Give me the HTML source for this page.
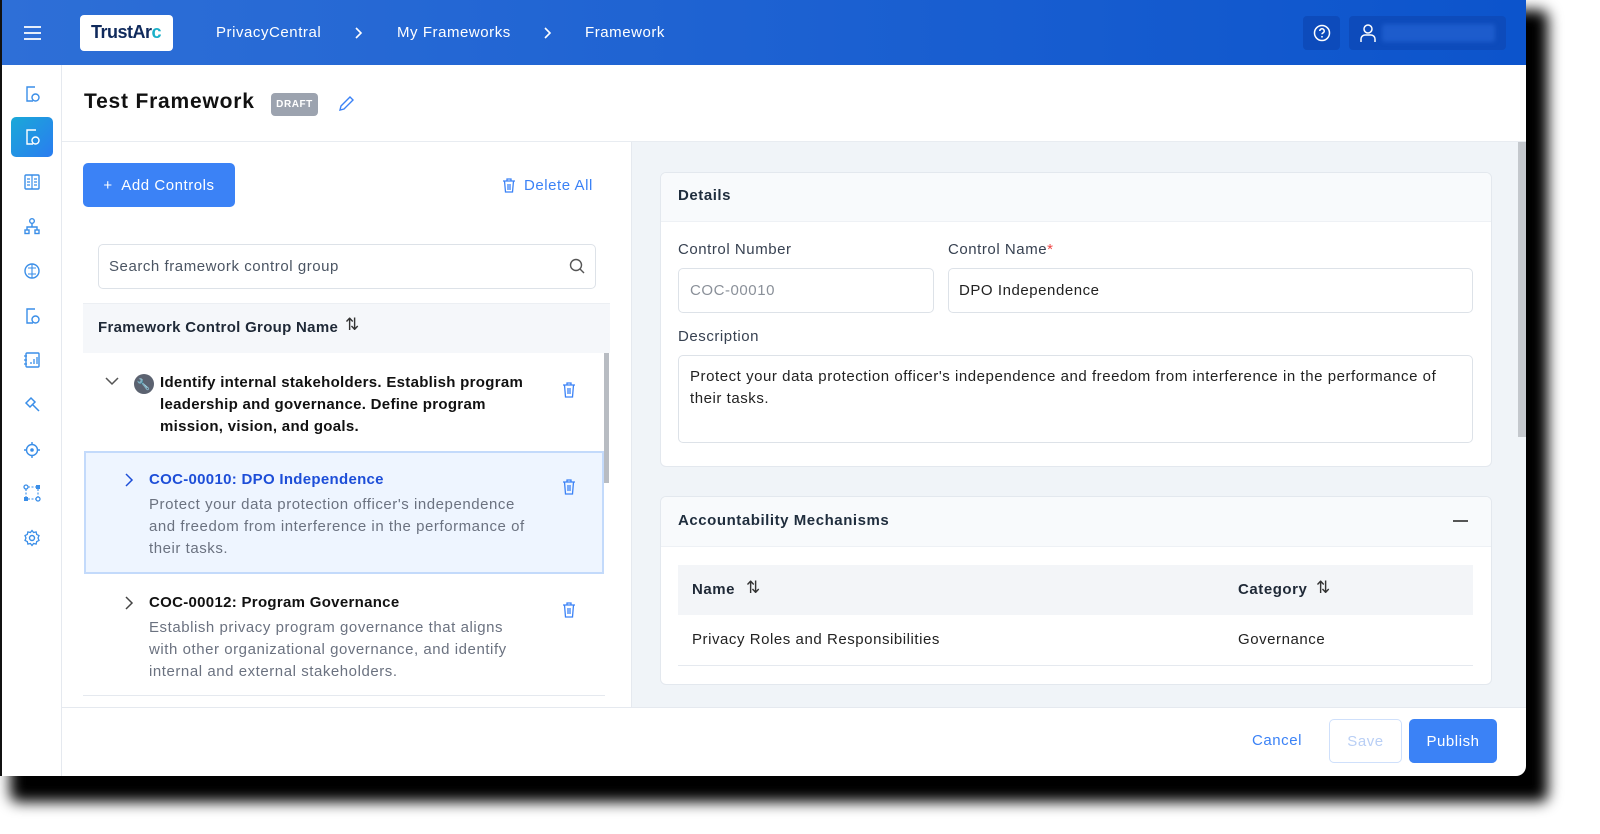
<!DOCTYPE html>
<html><head><meta charset="utf-8"><style>
*{box-sizing:border-box;margin:0;padding:0}
body{width:1600px;height:834px;background:#fff;position:relative;overflow:hidden;font-family:"Liberation Sans",sans-serif;color:#1f2937;letter-spacing:0.55px}
.shadow{position:absolute;left:10px;top:10px;width:1538px;height:792px;background:#000;border-radius:8px;filter:blur(7px)}
.win{position:absolute;left:0;top:0;width:1526px;height:776px;background:#fff;border-left:2px solid #111;border-bottom-right-radius:10px;overflow:hidden}
.hdr{position:absolute;left:0;top:0;width:1524px;height:65px;background:linear-gradient(90deg,#2e6fd7,#0c54cc);color:#fff}
.abs{position:absolute}
.t{position:absolute;white-space:nowrap}
.side{position:absolute;left:0;top:65px;width:60px;height:711px;background:#fff;border-right:1px solid #e5e9ef}
.ic{position:absolute;left:21px;width:18px;height:18px}
.btn{position:absolute;border-radius:5px;display:flex;align-items:center;justify-content:center;font-size:15px}
.in{position:absolute;background:#fff;border:1px solid #dde2e8;border-radius:5px;font-size:14.5px}
</style></head><body>
<div class="shadow"></div>
<div class="win">
 <div class="hdr">
  <svg class="abs" style="left:22px;top:26px" width="17" height="14"><path d="M0 1h17M0 7h17M0 13h17" stroke="#fff" stroke-width="1.8"/></svg>
  <div class="abs" style="left:78px;top:15px;width:93px;height:36px;background:#fff;border-radius:4px"></div>
  <div class="t" style="left:89px;top:22px;font-size:18px;font-weight:bold;color:#102a5c;letter-spacing:-0.5px">TrustAr<span style="color:#1ab0c8">c</span></div>
  <div class="t" style="left:214px;top:24px;font-size:15px">PrivacyCentral</div>
  <svg class="abs" style="left:353px;top:27px" width="8" height="12"><path d="M1 1l5 5-5 5" stroke="#fff" fill="none" stroke-width="1.6"/></svg>
  <div class="t" style="left:395px;top:24px;font-size:15px">My Frameworks</div>
  <svg class="abs" style="left:542px;top:27px" width="8" height="12"><path d="M1 1l5 5-5 5" stroke="#fff" fill="none" stroke-width="1.6"/></svg>
  <div class="t" style="left:583px;top:24px;font-size:15px">Framework</div>
  <div class="abs" style="left:1301px;top:16px;width:37px;height:34px;background:#0d4bbb;border-radius:4px"></div>
  <svg class="abs" style="left:1311px;top:24px" width="18" height="18"><circle cx="9" cy="9" r="7.5" stroke="#fff" fill="none" stroke-width="1.5"/><path d="M6.8 7a2.2 2.2 0 1 1 3 2c-.6.3-.8.7-.8 1.3" stroke="#fff" fill="none" stroke-width="1.5"/><circle cx="9" cy="12.8" r=".9" fill="#fff"/></svg>
  <div class="abs" style="left:1347px;top:16px;width:157px;height:34px;background:#0d4bbb;border-radius:4px"></div>
  <svg class="abs" style="left:1357px;top:23px" width="18" height="20"><circle cx="9" cy="6" r="4" stroke="#fff" fill="none" stroke-width="1.5"/><path d="M2 19v-3a4 4 0 0 1 4-4h6a4 4 0 0 1 4 4v3" stroke="#fff" fill="none" stroke-width="1.5"/></svg>
  <div class="abs" style="left:1380px;top:24px;width:113px;height:18px;background:#1d5ccc;border-radius:3px;filter:blur(2px)"></div>
 </div>
 <div class="side">
  <div class="abs" style="left:9px;top:52px;width:42px;height:40px;border-radius:5px;background:linear-gradient(135deg,#1aa9d8,#2a7cf0)"></div>
  <svg class="ic" style="top:20px" viewBox="0 0 18 18"><path d="M12 2H4v14h6" stroke="#3a8ee8" fill="none" stroke-width="1.4"/><circle cx="12.5" cy="12.5" r="3.5" stroke="#3a8ee8" fill="none" stroke-width="1.4"/></svg>
  <svg class="ic" style="top:63px" viewBox="0 0 18 18"><path d="M13 2H4v14h6" stroke="#fff" fill="none" stroke-width="1.4"/><circle cx="12.5" cy="12.5" r="3.5" stroke="#fff" fill="none" stroke-width="1.4"/></svg>
  <svg class="ic" style="top:108px" viewBox="0 0 18 18"><rect x="2" y="2" width="14" height="14" rx="1" stroke="#3a8ee8" fill="none" stroke-width="1.4"/><path d="M9 2v14M4 6h3M4 9h3M4 12h3M11 6h3M11 9h3M11 12h3" stroke="#3a8ee8" stroke-width="1.2"/></svg>
  <svg class="ic" style="top:152px" viewBox="0 0 18 18"><circle cx="9" cy="4" r="2.3" stroke="#3a8ee8" fill="none" stroke-width="1.4"/><path d="M9 6v4M4 13v-3h10v3" stroke="#3a8ee8" fill="none" stroke-width="1.4"/><rect x="2" y="13" width="4" height="3.5" stroke="#3a8ee8" fill="none" stroke-width="1.4"/><rect x="12" y="13" width="4" height="3.5" stroke="#3a8ee8" fill="none" stroke-width="1.4"/></svg>
  <svg class="ic" style="top:197px" viewBox="0 0 18 18"><circle cx="9" cy="9" r="7" stroke="#3a8ee8" fill="none" stroke-width="1.4"/><path d="M9 2v14M5 6h8M5 12h8" stroke="#3a8ee8" stroke-width="1.1"/></svg>
  <svg class="ic" style="top:242px" viewBox="0 0 18 18"><path d="M12 2H4v14h6" stroke="#3a8ee8" fill="none" stroke-width="1.4"/><circle cx="12.5" cy="12.5" r="3.5" stroke="#3a8ee8" fill="none" stroke-width="1.4"/></svg>
  <svg class="ic" style="top:286px" viewBox="0 0 18 18"><rect x="3" y="2" width="13" height="14" rx="1" stroke="#3a8ee8" fill="none" stroke-width="1.4"/><path d="M8 13v-2M11 13V8M14 13V6M1 5h3M1 9h3M1 13h3" stroke="#3a8ee8" stroke-width="1.3"/></svg>
  <svg class="ic" style="top:331px" viewBox="0 0 18 18"><path d="M3 7l5-5 4 4-5 5zM10 9l6 6" stroke="#3a8ee8" fill="none" stroke-width="1.5"/></svg>
  <svg class="ic" style="top:376px" viewBox="0 0 18 18"><circle cx="9" cy="9" r="5.5" stroke="#3a8ee8" fill="none" stroke-width="1.4"/><path d="M9 1v2M9 15v2M1 9h2M15 9h2" stroke="#3a8ee8" stroke-width="1.4"/><circle cx="9" cy="9" r="1.8" fill="#3a8ee8"/></svg>
  <svg class="ic" style="top:419px" viewBox="0 0 18 18"><circle cx="3" cy="3" r="2" stroke="#3a8ee8" fill="none" stroke-width="1.3"/><circle cx="15" cy="15" r="2" stroke="#3a8ee8" fill="none" stroke-width="1.3"/><rect x="13" y="1" width="4" height="4" fill="#3a8ee8"/><rect x="1" y="13" width="4" height="4" fill="#3a8ee8"/><path d="M5 3h8M3 5v8M15 5v8M5 15h8" stroke="#3a8ee8" stroke-width="1.1" stroke-dasharray="2 1.5"/></svg>
  <svg class="ic" style="top:464px" viewBox="0 0 18 18"><circle cx="9" cy="9" r="2.5" stroke="#3a8ee8" fill="none" stroke-width="1.4"/><path d="M9 1.5l1.6 2 2.5-.6.6 2.5 2.3 1.2-1 2.4 1 2.4-2.3 1.2-.6 2.5-2.5-.6L9 16.5l-1.6-2-2.5.6-.6-2.5-2.3-1.2 1-2.4-1-2.4 2.3-1.2.6-2.5 2.5.6z" stroke="#3a8ee8" fill="none" stroke-width="1.3"/></svg>
 </div>
 <div class="abs" style="left:60px;top:65px;width:1466px;height:77px;border-bottom:1px solid #e8ecf1"></div>
 <div class="t" style="left:82px;top:90px;font-size:21px;font-weight:bold;color:#111;letter-spacing:0.8px">Test Framework</div>
 <div class="abs" style="left:269px;top:93px;width:47px;height:23px;background:#9ca3af;border-radius:4px;color:#fff;font-size:10px;font-weight:bold;display:flex;align-items:center;justify-content:center">DRAFT</div>
 <svg class="abs" style="left:336px;top:95px" width="17" height="17"><path d="M2 15l1-4 9-9 3 3-9 9z" stroke="#3b82f6" fill="none" stroke-width="1.4"/></svg>
 <div class="btn" style="left:81px;top:163px;width:152px;height:44px;background:#3b82f6;color:#fff">+&nbsp; Add Controls</div>
 <svg class="abs" style="left:500px;top:178px" width="14" height="15"><path d="M1 3h12M5 3V1h4v2M2.5 3l1 11h7l1-11M6 6v6M8 6v6" stroke="#3b82f6" fill="none" stroke-width="1.3"/></svg>
 <div class="t" style="left:522px;top:177px;font-size:15px;color:#3b82f6">Delete All</div>
 <div class="in" style="left:96px;top:244px;width:498px;height:45px"></div>
 <div class="t" style="left:107px;top:258px;font-size:15px;color:#4b5563">Search framework control group</div>
 <svg class="abs" style="left:567px;top:258px" width="16" height="16"><circle cx="7" cy="7" r="5.5" stroke="#555" fill="none" stroke-width="1.4"/><path d="M11 11l4 4" stroke="#555" stroke-width="1.4"/></svg>
 <div class="abs" style="left:81px;top:303px;width:527px;height:50px;background:#f5f7fa;border-top:1px solid #eceff3"></div>
 <div class="t" style="left:96px;top:319px;font-size:15px;font-weight:bold;color:#1f2937;letter-spacing:0.3px">Framework Control Group Name</div>
 <div class="t" style="left:343px;top:315px;font-size:17px;color:#333">&#8645;</div>
 <svg class="abs" style="left:103px;top:377px" width="14" height="9"><path d="M1 1l6 6 6-6" stroke="#555" fill="none" stroke-width="1.5"/></svg>
 <div class="abs" style="left:132px;top:374px;width:20px;height:20px;border-radius:50%;background:#5b6270;color:#fff;font-size:11px;display:flex;align-items:center;justify-content:center">&#128295;</div>
 <div class="abs" style="left:158px;top:372px;width:385px;font-size:15px;font-weight:bold;line-height:22px;color:#111;letter-spacing:0.3px">Identify internal stakeholders. Establish program leadership and governance. Define program mission, vision, and goals.</div>
 <svg class="abs" style="left:560px;top:382px" width="14" height="16"><path d="M1 3h12M5 3V1h4v2M2.5 3l1 12h7l1-12M6 6v6M8 6v6" stroke="#3b82f6" fill="none" stroke-width="1.3"/></svg>
 <div class="abs" style="left:82px;top:451px;width:520px;height:123px;background:#eef5ff;border:2px solid #c3dafb"></div>
 <svg class="abs" style="left:123px;top:473px" width="9" height="14"><path d="M1 1l6 6-6 6" stroke="#1d4ed8" fill="none" stroke-width="1.5"/></svg>
 <div class="t" style="left:147px;top:471px;font-size:15px;font-weight:bold;color:#1d4ed8;letter-spacing:0.3px">COC-00010: DPO Independence</div>
 <div class="abs" style="left:147px;top:494px;width:395px;font-size:15px;line-height:22px;color:#6b7280">Protect your data protection officer's independence and freedom from interference in the performance of their tasks.</div>
 <svg class="abs" style="left:560px;top:479px" width="14" height="16"><path d="M1 3h12M5 3V1h4v2M2.5 3l1 12h7l1-12M6 6v6M8 6v6" stroke="#3b82f6" fill="none" stroke-width="1.3"/></svg>
 <svg class="abs" style="left:123px;top:596px" width="9" height="14"><path d="M1 1l6 6-6 6" stroke="#444" fill="none" stroke-width="1.5"/></svg>
 <div class="t" style="left:147px;top:594px;font-size:15px;font-weight:bold;color:#111;letter-spacing:0.3px">COC-00012: Program Governance</div>
 <div class="abs" style="left:147px;top:617px;width:375px;font-size:15px;line-height:22px;color:#6b7280">Establish privacy program governance that aligns with other organizational governance, and identify internal and external stakeholders.</div>
 <svg class="abs" style="left:560px;top:602px" width="14" height="16"><path d="M1 3h12M5 3V1h4v2M2.5 3l1 12h7l1-12M6 6v6M8 6v6" stroke="#3b82f6" fill="none" stroke-width="1.3"/></svg>
 <div class="abs" style="left:81px;top:695px;width:522px;height:1px;background:#e5e9ef"></div>
 <div class="abs" style="left:602px;top:353px;width:5px;height:130px;background:#b8bcc2"></div>
 <div class="abs" style="left:629px;top:142px;width:895px;height:565px;background:#f0f4f8;border-left:1px solid #e5e9ef"></div>
 <div class="abs" style="left:1516px;top:142px;width:8px;height:295px;background:#c4c8cd"></div>
 <div class="abs" style="left:658px;top:172px;width:832px;height:295px;background:#fff;border:1px solid #e3e8ee;border-radius:6px;overflow:hidden"><div style="height:49px;background:#f8fafc;border-bottom:1px solid #eef1f5"></div></div>
 <div class="t" style="left:676px;top:187px;font-size:15px;font-weight:bold;color:#1f2d3d">Details</div>
 <div class="t" style="left:676px;top:241px;font-size:15px;color:#374151">Control Number</div>
 <div class="t" style="left:946px;top:241px;font-size:15px;color:#374151">Control Name<span style="color:#ef4444">*</span></div>
 <div class="in" style="left:676px;top:268px;width:256px;height:45px"></div>
 <div class="t" style="left:688px;top:282px;font-size:15px;color:#8a9099">COC-00010</div>
 <div class="in" style="left:946px;top:268px;width:525px;height:45px"></div>
 <div class="t" style="left:957px;top:282px;font-size:15px;color:#222">DPO Independence</div>
 <div class="t" style="left:676px;top:328px;font-size:15px;color:#374151">Description</div>
 <div class="in" style="left:676px;top:355px;width:795px;height:88px"></div>
 <div class="abs" style="left:688px;top:366px;width:765px;font-size:15px;line-height:22px;color:#222">Protect your data protection officer's independence and freedom from interference in the performance of their tasks.</div>
 <div class="abs" style="left:658px;top:496px;width:832px;height:189px;background:#fff;border:1px solid #e3e8ee;border-radius:6px;overflow:hidden"><div style="height:50px;background:#f8fafc;border-bottom:1px solid #eef1f5"></div></div>
 <div class="t" style="left:676px;top:512px;font-size:15px;font-weight:bold;color:#1f2d3d">Accountability Mechanisms</div>
 <div class="abs" style="left:1451px;top:520px;width:15px;height:2px;background:#555"></div>
 <div class="abs" style="left:676px;top:565px;width:795px;height:50px;background:#f3f5f8"></div>
 <div class="t" style="left:690px;top:581px;font-size:15px;font-weight:bold;color:#1f2937">Name</div>
 <div class="t" style="left:744px;top:578px;font-size:17px;color:#333">&#8645;</div>
 <div class="t" style="left:1236px;top:581px;font-size:15px;font-weight:bold;color:#1f2937">Category</div>
 <div class="t" style="left:1314px;top:578px;font-size:17px;color:#333">&#8645;</div>
 <div class="t" style="left:690px;top:631px;font-size:15px;color:#222">Privacy Roles and Responsibilities</div>
 <div class="t" style="left:1236px;top:631px;font-size:15px;color:#222">Governance</div>
 <div class="abs" style="left:676px;top:665px;width:795px;height:1px;background:#e5e9ef"></div>
 <div class="abs" style="left:60px;top:707px;width:1466px;height:1px;background:#e5e9ef"></div>
 <div class="t" style="left:1250px;top:732px;font-size:15px;color:#3b82f6">Cancel</div>
 <div class="btn" style="left:1327px;top:719px;width:73px;height:44px;border:1px solid #cfe0fb;color:#b9cff5;background:#fff">Save</div>
 <div class="btn" style="left:1407px;top:719px;width:88px;height:44px;background:#3b82f6;color:#fff">Publish</div>
</div>
</body></html>
